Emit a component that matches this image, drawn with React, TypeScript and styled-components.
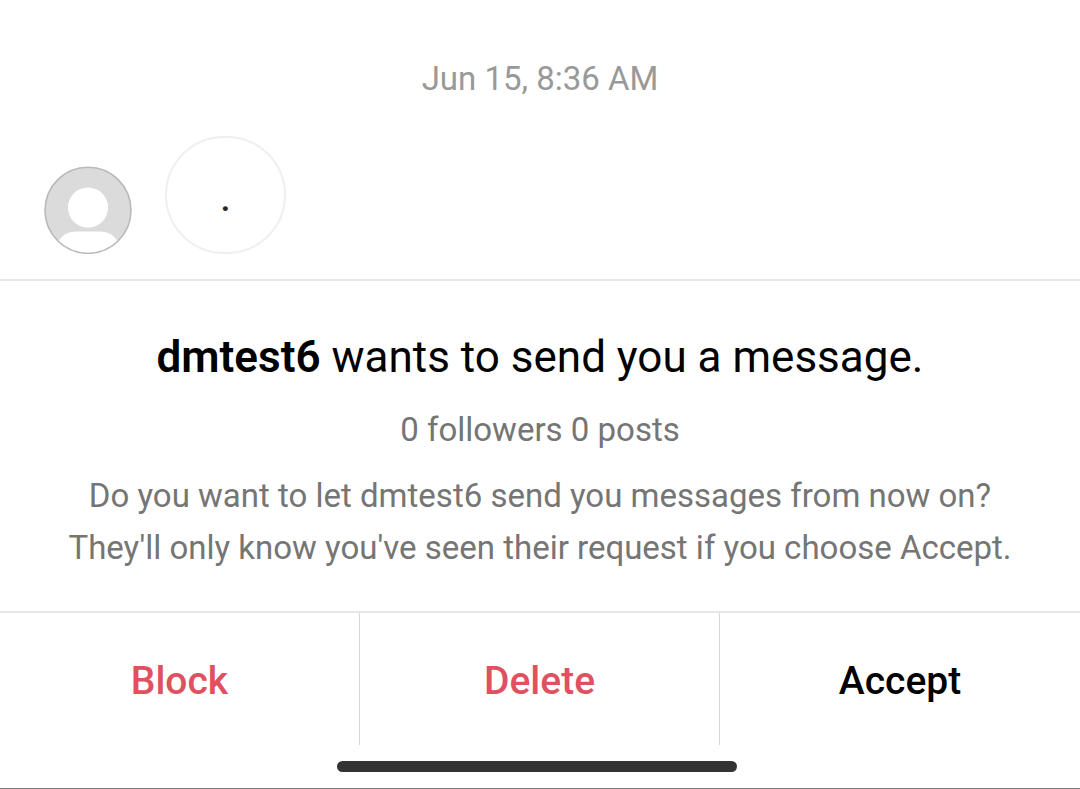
import React from 'react';
import styled, { createGlobalStyle } from 'styled-components';

const GlobalStyle = createGlobalStyle`
  * { box-sizing: border-box; }
  body { margin: 0; background: #fff; font-family: Roboto, sans-serif; }
`;

const Screen = styled.div`
  display: flex;
  flex-direction: column;
  min-height: 100vh;
  border-bottom: 1px solid #7c7c7c;
`;

const Thread = styled.section`
  padding: 59px 44px 25px;
  border-bottom: 2px solid #e8e8e8;
`;

const Timestamp = styled.time`
  display: block;
  text-align: center;
  font-size: 33px;
  line-height: 40px;
  color: #999;
`;

const MessageRow = styled.div`
  display: flex;
  align-items: flex-end;
  gap: 33px;
  margin-top: 37px;
`;

const Avatar = styled.svg`
  display: block;
  width: 88px;
  height: 88px;
`;

const Bubble = styled.div`
  display: flex;
  align-items: center;
  justify-content: center;
  width: 121px;
  height: 118px;
  padding-top: 2px;
  border: 2px solid #efefef;
  border-radius: 60px;
  font-size: 44px;
  line-height: 56px;
  color: #262626;
`;

const Request = styled.section`
  padding: 48px 24px 37px;
  text-align: center;
  border-bottom: 2px solid #e8e8e8;
`;

const Title = styled.h1`
  margin: 0;
  font-size: 44px;
  line-height: 56px;
  font-weight: 400;
  color: #000;
`;

const Name = styled.strong`
  font-weight: 600;
`;

const Stats = styled.p`
  margin: 25px 0 20px;
  font-size: 33px;
  line-height: 40px;
  color: #757575;
`;

const Explanation = styled.p`
  margin: 0;
  font-size: 33px;
  line-height: 52px;
  color: #757575;
`;

const Actions = styled.div`
  display: grid;
  grid-template-columns: repeat(3, 1fr);
`;

const ActionButton = styled.button<{ $danger?: boolean }>`
  height: 132px;
  padding: 4px 0 0;
  border: 0;
  border-right: 1px solid #d6d6d6;
  background: none;
  font-family: inherit;
  font-size: 39px;
  line-height: 48px;
  font-weight: 500;
  color: ${(p) => (p.$danger ? '#e0505f' : '#000')};

  &:last-child { border-right: 0; }
`;

const HomeIndicator = styled.div`
  width: 37%;
  height: 11px;
  margin: 16px 0 16px 31.2%;
  border-radius: 6px;
  background: #333;
`;

export default function App() {
  return (
    <>
      <GlobalStyle />
      <Screen>
        <Thread>
          <Timestamp>Jun 15, 8:36 AM</Timestamp>
          <MessageRow>
            <Avatar viewBox="0 0 88 88" role="img" aria-label="dmtest6">
              <defs>
                <clipPath id="face"><circle cx="44" cy="44" r="42.5" /></clipPath>
              </defs>
              <circle cx="44" cy="44.3" r="43" fill="#dbdbdb" stroke="#b9b9b9" strokeWidth="1.6" />
              <g clipPath="url(#face)" fill="#fff">
                <circle cx="44" cy="41.5" r="20" />
                <path d="M12 80C17 69 23 65.5 33 65.5H55C65 65.5 71 69 76 80V90H12Z" />
              </g>
            </Avatar>
            <Bubble>.</Bubble>
          </MessageRow>
        </Thread>
        <Request>
          <Title><Name>dmtest6</Name> wants to send you a message.</Title>
          <Stats>0 followers 0 posts</Stats>
          <Explanation>
            Do you want to let dmtest6 send you messages from now on?
            <br />
            They'll only know you've seen their request if you choose Accept.
          </Explanation>
        </Request>
        <Actions>
          <ActionButton type="button" $danger>Block</ActionButton>
          <ActionButton type="button" $danger>Delete</ActionButton>
          <ActionButton type="button">Accept</ActionButton>
        </Actions>
        <HomeIndicator />
      </Screen>
    </>
  );
}
